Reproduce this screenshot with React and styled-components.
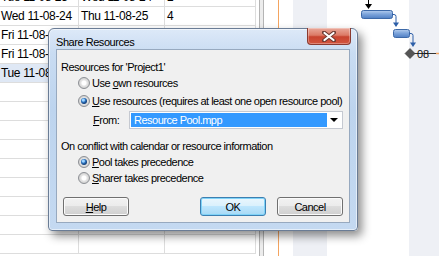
import React from "react";
import styled, { createGlobalStyle } from "styled-components";

const GlobalStyle = createGlobalStyle`
  html, body { margin: 0; padding: 0; background: #fff; }
  body { font-family: "Liberation Sans", Arial, sans-serif; }
`;

const Screen = styled.div`
  position: relative;
  width: 439px;
  height: 256px;
  overflow: hidden;
  display: flex;
  background: #fff;
`;

const Sheet = styled.div`
  width: 256px;
  flex: none;
  margin-top: -12px;
  display: flex;
  flex-direction: column;
`;

const Row = styled.div`
  display: flex;
  flex: none;
  height: 19px;
  box-sizing: border-box;
  border-bottom: 1px solid #dddddd;
  background: ${(p) => (p.$selected ? "#dfe8f5" : "#fff")};
`;

const Cell = styled.div`
  width: ${(p) => p.$w}px;
  flex: none;
  box-sizing: border-box;
  border-right: 1px solid #dddddd;
  padding-left: ${(p) => p.$pad}px;
  font-size: 12px;
  letter-spacing: -0.35px;
  line-height: 18px;
  color: #000;
  white-space: nowrap;
  overflow: hidden;
`;

const Splitter = styled.div`
  width: 8px;
  flex: none;
  background: linear-gradient(
    to right,
    #fff 0 3px,
    #b4b4b4 3px 4px,
    #ececec 4px 7px,
    #b4b4b4 7px 8px
  );
`;

const Gantt = styled.div`
  flex: 1;
  position: relative;
`;

const Chart = styled.svg`
  display: block;
`;

const Dialog = styled.div`
  position: absolute;
  left: 48px;
  top: 28px;
  width: 310px;
  height: 203px;
  box-sizing: border-box;
  display: flex;
  flex-direction: column;
  border: 1px solid #6a7c95;
  border-radius: 6px 6px 4px 4px;
  background: linear-gradient(to bottom, #dde9f8 0%, #c9dcf2 12%, #bdd4ee 40%, #c4d9f1 100%);
  box-shadow: inset 0 0 0 1px rgba(255, 255, 255, 0.55), 4px 5px 10px rgba(0, 0, 0, 0.45);
`;

const TitleBar = styled.div`
  height: 20px;
  flex: none;
  display: flex;
  align-items: flex-end;
  padding-left: 7px;
`;

const Title = styled.span`
  font-size: 11px;
  letter-spacing: -0.45px;
  line-height: 14px;
  color: #000;
`;

const CloseButton = styled.div`
  align-self: flex-start;
  margin: -1px 6px 0 auto;
  width: 44px;
  height: 17px;
  box-sizing: border-box;
  display: flex;
  align-items: center;
  justify-content: center;
  border: 1px solid #8a3a30;
  border-top: none;
  border-radius: 0 0 4px 4px;
  background: linear-gradient(to bottom, #e9a99b 0%, #dc7a66 45%, #c8432f 55%, #d2553f 100%);
  box-shadow: inset 0 0 0 1px rgba(255, 255, 255, 0.3);
`;

const Client = styled.div`
  flex: 1;
  margin: 0 7px 7px 7px;
  box-sizing: border-box;
  border: 1px solid #97a9bf;
  background: #f0f0f0;
  padding: 9px 6px 0 4px;
  display: flex;
  flex-direction: column;
  font-size: 11px;
  letter-spacing: -0.5px;
  color: #000;
`;

const Label = styled.div`
  height: ${(p) => p.$h || 15}px;
  margin-top: ${(p) => p.$mt || 0}px;
  display: flex;
  align-items: center;
  white-space: nowrap;
`;

const Key = styled.span`
  text-decoration: underline;
`;

const RadioRow = styled.div`
  height: ${(p) => p.$h}px;
  display: flex;
  align-items: center;
  padding-left: 17px;
  white-space: nowrap;
`;

const RadioDot = styled.span`
  position: relative;
  width: 12px;
  height: 12px;
  flex: none;
  box-sizing: border-box;
  margin-right: 2px;
  border-radius: 50%;
  border: 1px solid #8c8f94;
  background: radial-gradient(circle at 50% 50%, #ffffff 0 2px, #e6e6e6 3px, #d2d2d2 5px);
  &::after {
    content: "";
    display: ${(p) => (p.$on ? "block" : "none")};
    position: absolute;
    left: 2px;
    top: 2px;
    width: 6px;
    height: 6px;
    border-radius: 50%;
    background: radial-gradient(circle at 40% 35%, #9ed3ff 0 1px, #2f78c4 2px, #123f7a 3.5px);
  }
`;

const FromRow = styled.div`
  height: 20px;
  display: flex;
  align-items: center;
  padding-left: 32px;
`;

const FromLabel = styled.span`
  width: 36px;
  flex: none;
`;

const Combo = styled.div`
  width: 214px;
  height: 18px;
  box-sizing: border-box;
  display: flex;
  align-items: center;
  border: 1px solid #c5c9d1;
  background: #fff;
  padding: 1px;
`;

const Selection = styled.div`
  flex: 1;
  height: 14px;
  display: flex;
  align-items: center;
  padding-left: 3px;
  background: #3399ff;
  color: #fff;
`;

const Arrow = styled.div`
  width: 14px;
  flex: none;
  display: flex;
  justify-content: center;
  &::before {
    content: "";
    border-left: 4px solid transparent;
    border-right: 4px solid transparent;
    border-top: 4px solid #000;
  }
`;

const ButtonRow = styled.div`
  margin-top: 11px;
  margin-left: 2px;
  display: flex;
  justify-content: space-between;
`;

const ButtonGroup = styled.div`
  display: flex;
  gap: 11px;
`;

const Button = styled.div`
  width: 66px;
  height: 19px;
  box-sizing: border-box;
  display: flex;
  align-items: center;
  justify-content: center;
  border-radius: 3px;
  border: 1px solid ${(p) => (p.$default ? "#3c7fb1" : "#707070")};
  background: ${(p) =>
    p.$default
      ? "linear-gradient(to bottom, #eaf6fd 0%, #d9f0fc 50%, #bee6fd 50%, #a7d9f5 100%)"
      : "linear-gradient(to bottom, #f2f2f2 0%, #ebebeb 50%, #dddddd 50%, #cfcfcf 100%)"};
  box-shadow: inset 0 0 0 1px ${(p) => (p.$default ? "#7fd3f8" : "#fbfbfb")};
`;

const rows = [
  ["Tue 11-08-23", "Wed 11-08-24", "2"],
  ["Wed 11-08-24", "Thu 11-08-25", "4"],
  ["Fri 11-08-26", "Fri 11-08-26", ""],
  ["Fri 11-08-26", "Mon 11-08-29", ""],
  ["Tue 11-08-30", "Tue 11-08-30", ""],
];

function GanttChart() {
  return (
    <Chart width="175" height="256" viewBox="0 0 175 256">
      <rect x="29" y="0" width="34" height="256" fill="#eef0f5" />
      <rect x="145" y="0" width="30" height="256" fill="#eef0f5" />
      <line x1="14.5" y1="0" x2="14.5" y2="256" stroke="#f4a460" strokeWidth="1" />
      <defs>
        <linearGradient id="bar" x1="0" y1="0" x2="0" y2="1">
          <stop offset="0" stopColor="#b4cdee" />
          <stop offset="0.45" stopColor="#7ea5db" />
          <stop offset="1" stopColor="#4f7fc4" />
        </linearGradient>
      </defs>
      <line x1="104.5" y1="0" x2="104.5" y2="5" stroke="#000" />
      <polygon points="101,4 108,4 104.5,9" fill="#000" />
      <rect x="97.5" y="10.5" width="31" height="8" rx="2" fill="url(#bar)" stroke="#3d69a8" />
      <path d="M128.5 14.5 H130 Q132 14.5 132 16.5 V23" fill="none" stroke="#2d5fa8" />
      <polygon points="129,22.5 135,22.5 132,27" fill="#2d5fa8" />
      <rect x="129.5" y="29.5" width="16" height="8" rx="2" fill="url(#bar)" stroke="#3d69a8" />
      <path d="M145.5 33.5 H147 Q149 33.5 149 35.5 V43" fill="none" stroke="#2d5fa8" />
      <polygon points="146,42.5 152,42.5 149,47" fill="#2d5fa8" />
      <line x1="150" y1="53.5" x2="175" y2="53.5" stroke="#333" />
      <polygon points="146,48.5 151,53.5 146,58.5 141,53.5" fill="#555" stroke="#333" strokeWidth="0.6" />
      <text x="153" y="57.5" fontSize="11" fontFamily="Liberation Sans, Arial, sans-serif" fill="#111">
        08
      </text>
      <line x1="172" y1="53.5" x2="175" y2="53.5" stroke="#f4a460" strokeWidth="1.5" />
    </Chart>
  );
}

export default function App() {
  return (
    <>
      <GlobalStyle />
      <Screen>
        <Sheet>
          {rows.map((r, i) => (
            <Row key={i} $selected={i === 4}>
              <Cell $w={79} $pad={1}>{r[0]}</Cell>
              <Cell $w={86} $pad={2}>{r[1]}</Cell>
              <Cell $w={91} $pad={2}>{r[2]}</Cell>
            </Row>
          ))}
          {Array.from({ length: 9 }).map((_, i) => (
            <Row key={"e" + i}>
              <Cell $w={79} />
              <Cell $w={86} />
              <Cell $w={91} />
            </Row>
          ))}
        </Sheet>
        <Splitter />
        <Gantt>
          <GanttChart />
        </Gantt>

        <Dialog>
          <TitleBar>
            <Title>Share Resources</Title>
            <CloseButton>
              <svg width="14" height="11" viewBox="0 0 14 11">
                <path d="M2 1.5 L12 9.5 M12 1.5 L2 9.5" stroke="#6b3a33" strokeWidth="4" strokeLinecap="round" />
                <path d="M2.5 2 L11.5 9 M11.5 2 L2.5 9" stroke="#ffffff" strokeWidth="2.2" strokeLinecap="round" />
              </svg>
            </CloseButton>
          </TitleBar>
          <Client>
            <Label>Resources for 'Project1'</Label>
            <RadioRow $h={18}>
              <RadioDot />
              <span>
                Use <Key>o</Key>wn resources
              </span>
            </RadioRow>
            <RadioRow $h={18}>
              <RadioDot $on />
              <span>
                <Key>U</Key>se resources (requires at least one open resource pool)
              </span>
            </RadioRow>
            <FromRow>
              <FromLabel>
                <Key>F</Key>rom:
              </FromLabel>
              <Combo>
                <Selection>Resource Pool.mpp</Selection>
                <Arrow />
              </Combo>
            </FromRow>
            <Label $mt={8} $h={16}>On conflict with calendar or resource information</Label>
            <RadioRow $h={16}>
              <RadioDot $on />
              <span>
                <Key>P</Key>ool takes precedence
              </span>
            </RadioRow>
            <RadioRow $h={16}>
              <RadioDot />
              <span>
                <Key>S</Key>harer takes precedence
              </span>
            </RadioRow>
            <ButtonRow>
              <Button>
                <span>
                  <Key>H</Key>elp
                </span>
              </Button>
              <ButtonGroup>
                <Button $default>OK</Button>
                <Button>Cancel</Button>
              </ButtonGroup>
            </ButtonRow>
          </Client>
        </Dialog>
      </Screen>
    </>
  );
}
